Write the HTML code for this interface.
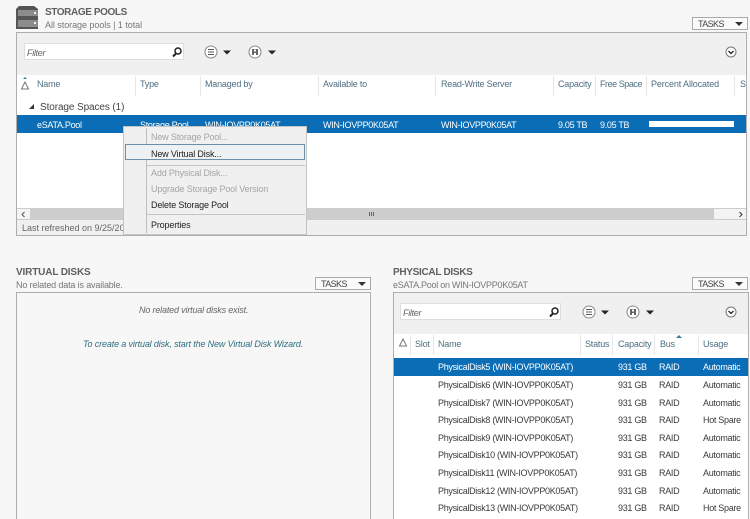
<!DOCTYPE html>
<html><head><meta charset="utf-8">
<style>
html,body{margin:0;padding:0}
html{width:750px;height:519px;overflow:hidden;background:#f7f7f7}
body{width:750px;height:519px;overflow:hidden;background:#f7f7f7;position:relative;font-family:"Liberation Sans",sans-serif;font-size:9px;color:#444;filter:blur(.3px)}
div,span.a{position:absolute;white-space:nowrap}
.h{font-weight:bold;font-size:10px;color:#5f5f5f;letter-spacing:-.2px}
.s{color:#777;font-size:9px;letter-spacing:-.15px}
.c{color:#4f6f82;font-size:9px;letter-spacing:-.2px}
.sep{width:1px;background:#e6e6e6}
.t{color:#3a3a3a;font-size:9px;letter-spacing:-.3px}
.w{color:#fff;font-size:9px;letter-spacing:-.3px}
.btn{border:1px solid #aaa;background:#fafafa;color:#444;box-sizing:border-box;font-size:9px}
.btn span:first-child{letter-spacing:-.6px;top:1px!important;left:5px!important}
.m{font-size:9px;color:#222;letter-spacing:-.16px}
.g{color:#a5a5a5}
.f{font-style:italic;color:#666;font-size:9px;letter-spacing:-.3px}
svg{position:absolute;overflow:visible}
</style></head><body>

<!-- Storage pool icon -->
<svg style="left:15px;top:6px" width="25" height="24" viewBox="0 0 25 24">
<path d="M4 0h15l4 3v20H1V3z" fill="#555"/>
<rect x="3" y="4" width="20" height="6" fill="#8c8c8c"/>
<rect x="3" y="14" width="20" height="7" fill="#8c8c8c"/>
<rect x="19" y="6" width="2" height="2" fill="#eee"/><rect x="19" y="16" width="2" height="2" fill="#eee"/>
</svg>
<div class="h" style="left:45px;top:7px;letter-spacing:-.4px">STORAGE POOLS</div>
<div class="s" style="left:45px;top:20px;letter-spacing:-.05px">All storage pools | 1 total</div>
<div class="btn" style="left:692px;top:17px;width:56px;height:13px"><span class="a" style="left:6px;top:0">TASKS</span><span class="a" style="left:42px;top:4px;border:4px solid transparent;border-top:4px solid #333;border-bottom:0"></span></div>

<!-- Top panel -->
<div style="left:16px;top:32px;width:731px;height:204px;box-sizing:border-box;border:1px solid #aeaeae;background:#fff"></div>
<div style="left:17px;top:33px;width:729px;height:42px;background:#f0f0f0"></div>
<div style="left:24px;top:43px;width:160px;height:17px;background:#fff;border:1px solid #ddd;box-sizing:border-box"></div>
<div class="f" style="left:27px;top:48px">Filter</div>
<svg style="left:171px;top:46px" width="12" height="12" viewBox="0 0 12 12"><circle cx="7" cy="5" r="3" fill="none" stroke="#222" stroke-width="1.5"/><path d="M5 7.5L2 10.5" stroke="#222" stroke-width="2"/></svg>
<svg style="left:204px;top:45px" width="80" height="14" viewBox="0 0 80 14">
<circle cx="7" cy="7" r="6" fill="#fff" stroke="#888"/><path d="M4 4.500h6M4 7h6M4 9.500h6" stroke="#555"/>
<path d="M19 5.500h8l-4 4z" fill="#222"/>
<circle cx="51" cy="7" r="6" fill="#fff" stroke="#888"/><rect x="48" y="4" width="6" height="6" fill="#666"/><rect x="50" y="4.500" width="2" height="2" fill="#fff"/><rect x="50" y="8" width="2" height="2" fill="#fff"/>
<path d="M64 5.500h8l-4 4z" fill="#222"/>
</svg>
<svg style="left:725px;top:46px" width="12" height="12" viewBox="0 0 12 12"><circle cx="6" cy="6" r="5" fill="#fff" stroke="#777"/><path d="M3.500 5l2.500 2.500L8.500 5" fill="none" stroke="#222" stroke-width="1.300"/></svg>

<!-- Column header -->
<svg style="left:20px;top:76px" width="10" height="14" viewBox="0 0 10 14"><path d="M5 1l2 2H3z" fill="#3b7b9b"/><path d="M5 6l3.500 7h-7z" fill="none" stroke="#777"/></svg>
<div class="c" style="left:37px;top:79px">Name</div>
<div class="c" style="left:140px;top:79px">Type</div>
<div class="c" style="left:205px;top:79px">Managed by</div>
<div class="c" style="left:323px;top:79px">Available to</div>
<div class="c" style="left:441px;top:79px">Read-Write Server</div>
<div class="c" style="left:558px;top:79px">Capacity</div>
<div class="c" style="left:600px;top:79px;letter-spacing:-.45px">Free Space</div>
<div class="c" style="left:651px;top:79px;letter-spacing:-.12px">Percent Allocated</div>
<div class="c" style="left:740px;top:79px;width:6px;overflow:hidden">St</div>
<div class="sep" style="left:135px;top:76px;height:20px"></div>
<div class="sep" style="left:200px;top:76px;height:20px"></div>
<div class="sep" style="left:318px;top:76px;height:20px"></div>
<div class="sep" style="left:435px;top:76px;height:20px"></div>
<div class="sep" style="left:553px;top:76px;height:20px"></div>
<div class="sep" style="left:595px;top:76px;height:20px"></div>
<div class="sep" style="left:646px;top:76px;height:20px"></div>
<div class="sep" style="left:734px;top:76px;height:20px"></div>

<svg style="left:28px;top:103px" width="7" height="7" viewBox="0 0 7 7"><path d="M6 1v5H1z" fill="#333"/></svg>
<div style="left:40px;top:102px;font-size:10px;color:#444;letter-spacing:-.1px">Storage Spaces (1)</div>

<!-- Selected row -->
<div style="left:17px;top:115px;width:729px;height:18px;background:#0a6db5"></div>
<div class="w" style="left:37px;top:120px">eSATA.Pool</div>
<div class="w" style="left:140px;top:120px">Storage Pool</div>
<div class="w" style="left:205px;top:120px">WIN-IOVPP0K05AT</div>
<div class="w" style="left:323px;top:120px">WIN-IOVPP0K05AT</div>
<div class="w" style="left:441px;top:120px">WIN-IOVPP0K05AT</div>
<div class="w" style="left:558px;top:120px">9.05 TB</div>
<div class="w" style="left:600px;top:120px">9.05 TB</div>
<div style="left:649px;top:121px;width:85px;height:6px;background:#fff"></div>

<!-- Scrollbar -->
<div style="left:17px;top:208px;width:729px;height:12px;background:#f4f4f4;border-top:1px solid #ccc;border-bottom:1px solid #ccc;box-sizing:border-box"></div>
<div style="left:30px;top:208px;width:684px;height:12px;background:#cdcdcd"></div>
<div style="left:369px;top:212px;width:6px;height:4px;background:repeating-linear-gradient(90deg,#666 0 1px,transparent 1px 2px)"></div>
<svg style="left:20px;top:211px" width="6" height="7" viewBox="0 0 6 7"><path d="M4.500 1L2 3.500 4.500 6" fill="none" stroke="#555"/></svg>
<svg style="left:738px;top:211px" width="6" height="7" viewBox="0 0 6 7"><path d="M1.500 1L4 3.500 1.500 6" fill="none" stroke="#333"/></svg>
<div style="left:17px;top:220px;width:729px;height:15px;background:#f0f0f0"></div>
<div style="left:22px;top:223px;color:#666;font-size:9px">Last refreshed on 9/25/2015</div>

<!-- Context menu -->
<div style="left:123px;top:126px;width:184px;height:109px;background:#f0f0f0;border:1px solid #c4c4c4;box-sizing:border-box"></div>
<div style="left:146px;top:128px;width:1px;height:105px;background:#bdbdbd"></div>
<div style="left:125px;top:144px;width:180px;height:16px;box-sizing:border-box;border:1px solid #6d8ea5;background:#eef1f3"></div>
<div style="left:147px;top:165px;width:158px;height:1px;background:#c4c4c4"></div>
<div style="left:147px;top:214px;width:158px;height:1px;background:#c4c4c4"></div>
<div class="m g" style="left:151px;top:132px">New Storage Pool...</div>
<div class="m" style="left:151px;top:149px">New Virtual Disk...</div>
<div class="m g" style="left:151px;top:168px">Add Physical Disk...</div>
<div class="m g" style="left:151px;top:184px">Upgrade Storage Pool Version</div>
<div class="m" style="left:151px;top:200px">Delete Storage Pool</div>
<div class="m" style="left:151px;top:220px">Properties</div>

<!-- Virtual disks -->
<div class="h" style="left:16px;top:267px;letter-spacing:-.15px">VIRTUAL DISKS</div>
<div class="s" style="left:16px;top:280px">No related data is available.</div>
<div class="btn" style="left:315px;top:277px;width:56px;height:13px"><span class="a" style="left:6px;top:0">TASKS</span><span class="a" style="left:42px;top:4px;border:4px solid transparent;border-top:4px solid #333;border-bottom:0"></span></div>
<div style="left:16px;top:292px;width:355px;height:240px;box-sizing:border-box;border:1px solid #aeaeae;background:#f7f7f7"></div>
<div style="left:139px;top:305px;font-style:italic;color:#666;font-size:9px;letter-spacing:-.17px">No related virtual disks exist.</div>
<div style="left:83px;top:339px;font-style:italic;color:#2f6f80;font-size:9px;letter-spacing:-.14px">To create a virtual disk, start the New Virtual Disk Wizard.</div>

<!-- Physical disks -->
<div class="h" style="left:393px;top:267px;letter-spacing:-.3px">PHYSICAL DISKS</div>
<div class="s" style="left:393px;top:280px;letter-spacing:-.27px">eSATA.Pool on WIN-IOVPP0K05AT</div>
<div class="btn" style="left:692px;top:277px;width:56px;height:13px"><span class="a" style="left:6px;top:0">TASKS</span><span class="a" style="left:42px;top:4px;border:4px solid transparent;border-top:4px solid #333;border-bottom:0"></span></div>
<div style="left:393px;top:292px;width:356px;height:240px;box-sizing:border-box;border:1px solid #aeaeae;background:#fff"></div>
<div style="left:394px;top:293px;width:354px;height:41px;background:#f0f0f0"></div>
<div style="left:400px;top:303px;width:161px;height:17px;background:#fff;border:1px solid #ddd;box-sizing:border-box"></div>
<div class="f" style="left:403px;top:308px">Filter</div>
<svg style="left:548px;top:306px" width="12" height="12" viewBox="0 0 12 12"><circle cx="7" cy="5" r="3" fill="none" stroke="#222" stroke-width="1.500"/><path d="M5 7.500L2 10.500" stroke="#222" stroke-width="2"/></svg>
<svg style="left:582px;top:305px" width="80" height="14" viewBox="0 0 80 14">
<circle cx="7" cy="7" r="6" fill="#fff" stroke="#888"/><path d="M4 4.500h6M4 7h6M4 9.500h6" stroke="#555"/>
<path d="M19 5.500h8l-4 4z" fill="#222"/>
<circle cx="51" cy="7" r="6" fill="#fff" stroke="#888"/><rect x="48" y="4" width="6" height="6" fill="#666"/><rect x="50" y="4.500" width="2" height="2" fill="#fff"/><rect x="50" y="8" width="2" height="2" fill="#fff"/>
<path d="M64 5.500h8l-4 4z" fill="#222"/>
</svg>
<svg style="left:725px;top:306px" width="12" height="12" viewBox="0 0 12 12"><circle cx="6" cy="6" r="5" fill="#fff" stroke="#777"/><path d="M3.500 5l2.500 2.500L8.500 5" fill="none" stroke="#222" stroke-width="1.300"/></svg>

<svg style="left:398px;top:338px" width="10" height="10" viewBox="0 0 10 10"><path d="M5 1l3.500 7h-7z" fill="none" stroke="#777"/></svg>
<div class="c" style="left:415px;top:339px">Slot</div>
<div class="c" style="left:438px;top:339px">Name</div>
<div class="c" style="left:585px;top:339px">Status</div>
<div class="c" style="left:618px;top:339px">Capacity</div>
<div class="c" style="left:660px;top:339px">Bus</div>
<div class="c" style="left:703px;top:339px">Usage</div>
<svg style="left:676px;top:335px" width="6" height="4" viewBox="0 0 6 4"><path d="M3 0l3 3H0z" fill="#3b7b9b"/></svg>
<div class="sep" style="left:410px;top:335px;height:20px"></div>
<div class="sep" style="left:433px;top:335px;height:20px"></div>
<div class="sep" style="left:580px;top:335px;height:20px"></div>
<div class="sep" style="left:612px;top:335px;height:20px"></div>
<div class="sep" style="left:654px;top:335px;height:20px"></div>
<div class="sep" style="left:698px;top:335px;height:20px"></div>

<div style="left:394px;top:358px;width:354px;height:18px;background:#0a6db5"></div>
<div class="w" style="left:438px;top:362px">PhysicalDisk5 (WIN-IOVPP0K05AT)</div><div class="w" style="left:618px;top:362px">931 GB</div><div class="w" style="left:659px;top:362px">RAID</div><div class="w" style="left:703px;top:362px">Automatic</div>

<div class="t" style="left:438px;top:380px">PhysicalDisk6 (WIN-IOVPP0K05AT)</div><div class="t" style="left:618px;top:380px">931 GB</div><div class="t" style="left:659px;top:380px">RAID</div><div class="t" style="left:703px;top:380px">Automatic</div>
<div class="t" style="left:438px;top:398px">PhysicalDisk7 (WIN-IOVPP0K05AT)</div><div class="t" style="left:618px;top:398px">931 GB</div><div class="t" style="left:659px;top:398px">RAID</div><div class="t" style="left:703px;top:398px">Automatic</div>
<div class="t" style="left:438px;top:415px">PhysicalDisk8 (WIN-IOVPP0K05AT)</div><div class="t" style="left:618px;top:415px">931 GB</div><div class="t" style="left:659px;top:415px">RAID</div><div class="t" style="left:703px;top:415px">Hot Spare</div>
<div class="t" style="left:438px;top:433px">PhysicalDisk9 (WIN-IOVPP0K05AT)</div><div class="t" style="left:618px;top:433px">931 GB</div><div class="t" style="left:659px;top:433px">RAID</div><div class="t" style="left:703px;top:433px">Automatic</div>
<div class="t" style="left:438px;top:450px">PhysicalDisk10 (WIN-IOVPP0K05AT)</div><div class="t" style="left:618px;top:450px">931 GB</div><div class="t" style="left:659px;top:450px">RAID</div><div class="t" style="left:703px;top:450px">Automatic</div>
<div class="t" style="left:438px;top:468px">PhysicalDisk11 (WIN-IOVPP0K05AT)</div><div class="t" style="left:618px;top:468px">931 GB</div><div class="t" style="left:659px;top:468px">RAID</div><div class="t" style="left:703px;top:468px">Automatic</div>
<div class="t" style="left:438px;top:486px">PhysicalDisk12 (WIN-IOVPP0K05AT)</div><div class="t" style="left:618px;top:486px">931 GB</div><div class="t" style="left:659px;top:486px">RAID</div><div class="t" style="left:703px;top:486px">Automatic</div>
<div class="t" style="left:438px;top:503px">PhysicalDisk13 (WIN-IOVPP0K05AT)</div><div class="t" style="left:618px;top:503px">931 GB</div><div class="t" style="left:659px;top:503px">RAID</div><div class="t" style="left:703px;top:503px">Hot Spare</div>

</body></html>
